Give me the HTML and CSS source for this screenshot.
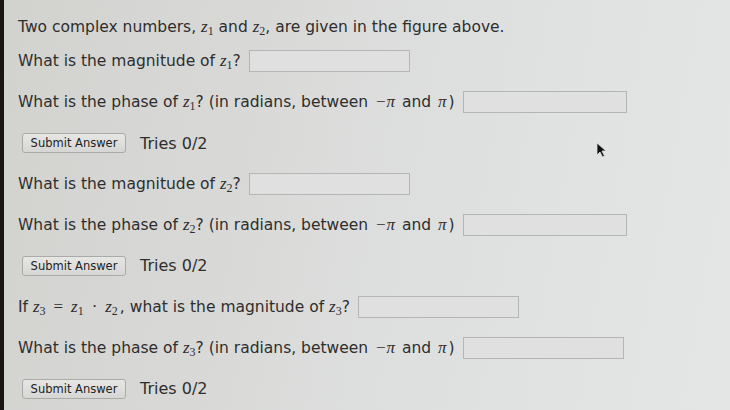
FILE: index.html
```html
<!DOCTYPE html>
<html>
<head>
<meta charset="utf-8">
<link rel="stylesheet" href="styles.css">
</head>
<body>
<div class="screen">
  <div class="content">
    <div class="row first"><span class="q">Two complex numbers, <span class="m">z<sub>1</sub></span> and <span class="m">z<sub>2</sub></span>, are given in the figure above.</span></div>
    <div class="row"><span class="q">What is the magnitude of <span class="m">z<sub>1</sub></span>?</span><span class="inp"></span></div>
    <div class="row"><span class="q">What is the phase of <span class="m">z<sub>1</sub></span>? (in radians, between <span class="pi">&minus;&pi;</span> and <span class="pi">&pi;</span>)</span><span class="inp wide"></span></div>
    <div class="row"><span class="btn">Submit Answer</span><span class="tries">Tries 0/2</span></div>
    <div class="row"><span class="q">What is the magnitude of <span class="m">z<sub>2</sub></span>?</span><span class="inp"></span></div>
    <div class="row"><span class="q">What is the phase of <span class="m">z<sub>2</sub></span>? (in radians, between <span class="pi">&minus;&pi;</span> and <span class="pi">&pi;</span>)</span><span class="inp wide"></span></div>
    <div class="row"><span class="btn">Submit Answer</span><span class="tries">Tries 0/2</span></div>
    <div class="row"><span class="q">If <span class="m">z<sub>3</sub></span> <span class="op">=</span> <span class="m">z<sub>1</sub></span> <span class="op">&middot;</span> <span class="m">z<sub>2</sub></span><span class="cm">,</span> what is the magnitude of <span class="m">z<sub>3</sub></span>?</span><span class="inp"></span></div>
    <div class="row"><span class="q">What is the phase of <span class="m">z<sub>3</sub></span>? (in radians, between <span class="pi">&minus;&pi;</span> and <span class="pi">&pi;</span>)</span><span class="inp"></span></div>
    <div class="row"><span class="btn">Submit Answer</span><span class="tries">Tries 0/2</span></div>
  </div>
  <svg class="cursor" width="12" height="16" viewBox="0 0 12 16"><path d="M1 1 L1 13 L4 10 L6.5 15 L8.5 14 L6 9 L10 9 Z" fill="#111" stroke="#ddd" stroke-width="0.8"/></svg>
</div>
</body>
</html>
```

FILE: styles.css
```css
html, body {
  margin: 0;
  padding: 0;
}
body {
  width: 730px;
  height: 410px;
  overflow: hidden;
}
.screen {
  position: relative;
  width: 730px;
  height: 410px;
  box-sizing: border-box;
  border-left: 4px solid #1a1414;
  background: linear-gradient(100deg, #d2d2cf 0%, #d9dad8 35%, #e0e2e2 70%, #e4e6e6 100%);
  font-family: "DejaVu Sans", Verdana, sans-serif;
  font-size: 15.5px;
  color: #2e2e2e;
}
.content {
  padding: 13px 0 0 14px;
}
.row {
  height: 40.9px;
  display: flex;
  align-items: center;
}
.row.first {
  height: 28px;
}
.q {
  white-space: pre;
  margin-right: 8px;
}
.m {
  font-family: "Liberation Serif", "Times New Roman", serif;
  font-style: italic;
  font-size: 17px;
}
.m sub {
  font-style: normal;
  font-size: 12px;
  vertical-align: -3px;
  line-height: 0;
}
.pi {
  font-family: "Liberation Serif", serif;
  font-style: italic;
  font-size: 17px;
  padding: 0 2px;
}
.op {
  font-family: "Liberation Serif", serif;
  font-size: 17px;
  padding: 0 3px;
}
.cm {
  padding-left: 2px;
}
.inp {
  display: inline-block;
  width: 159px;
  height: 20px;
  border: 1px solid #b4b6b6;
  background: #dfe0df;
}
.inp.wide {
  width: 162px;
}
.btn {
  display: inline-block;
  margin-left: 4px;
  width: 102px;
  height: 18px;
  line-height: 18px;
  text-align: center;
  border: 1px solid #aaaaa8;
  border-radius: 3px;
  background: linear-gradient(#e6e6e4, #d6d6d4);
  font-size: 11.5px;
  color: #222;
}
.tries {
  margin-left: 14px;
  font-size: 16px;
}
.cursor {
  position: absolute;
  left: 592px;
  top: 142px;
}
```
